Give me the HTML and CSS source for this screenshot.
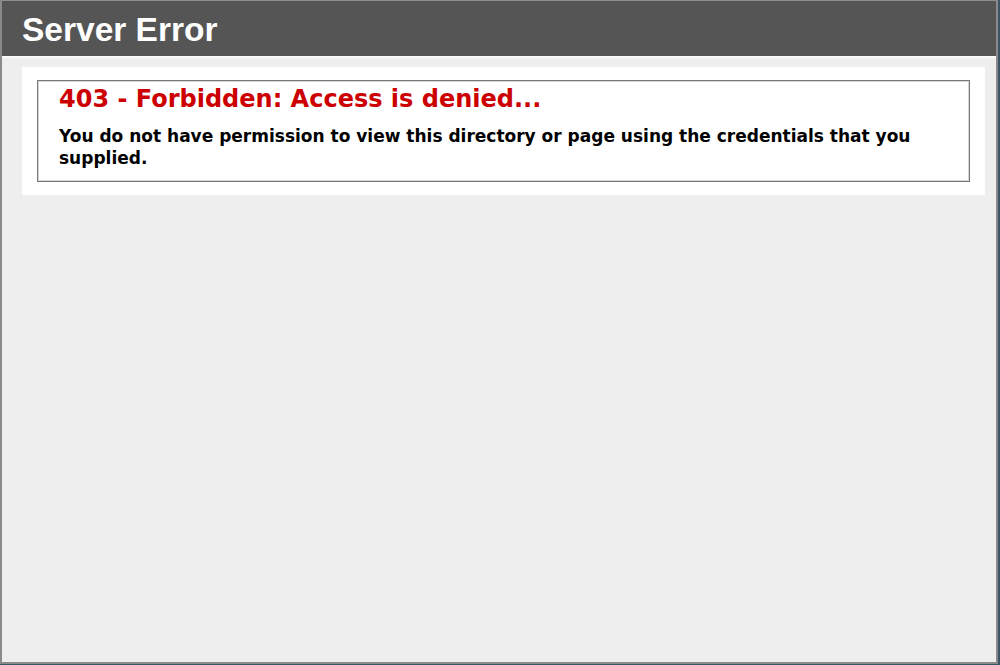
FILE: index.html
```html
<!DOCTYPE html>
<html>
<head>
<meta charset="utf-8">
<title>403 - Forbidden: Access is denied.</title>
<link rel="stylesheet" href="styles.css">
</head>
<body>
<div class="window">
  <div class="header"><h1 class="title">Server Error</h1></div>
  <div class="content">
    <div class="container">
      <div class="fieldset">
        <h2 class="err-title">403 - Forbidden: Access is denied...</h2>
        <h3 class="err-text">You do not have permission to view this directory or page using the credentials that you supplied.</h3>
      </div>
    </div>
  </div>
</div>
</body>
</html>
```

FILE: styles.css
```css
html, body {
  margin: 0;
  padding: 0;
  height: 665px;
  overflow: hidden;
  background: #3b5565;
}
.window {
  box-sizing: border-box;
  width: 998px;
  height: 664px;
  background: #eeeeee;
  border-left: 2px solid #8a8a8a;
  border-right: 2px solid #8a8a8a;
  border-bottom: 2px solid #8a8a8a;
  border-top: 1px solid #8d8d8d;
  display: flex;
  flex-direction: column;
}
.header {
  box-sizing: border-box;
  height: 57px;
  background: #555555;
  border-bottom: 2px solid #fafafa;
  display: flex;
  align-items: center;
  padding: 3px 0 0 20px;
}
.title {
  margin: 0;
  font-family: "Liberation Sans", Arial, sans-serif;
  font-weight: bold;
  font-size: 33.5px;
  color: #ffffff;
  line-height: 1;
}
.content {
  padding: 9px 0 0 20px;
}
.container {
  box-sizing: border-box;
  width: 963px;
  background: #ffffff;
  padding: 13px 15px 13px 15px;
}
.fieldset {
  box-sizing: border-box;
  height: 102px;
  border: 1px solid #7a7a7a;
  box-shadow: inset 1px 1px 0 #d6d6d6, inset -1px -1px 0 #d6d6d6;
  padding: 4px 20px 0 21px;
  font-family: "DejaVu Sans", Verdana, sans-serif;
}
.err-title {
  margin: 0;
  font-size: 24px;
  line-height: 28px;
  color: #cc0000;
  font-weight: bold;
}
.err-text {
  margin: 12px 0 0 0;
  font-size: 17px;
  line-height: 22px;
  color: #000000;
  font-weight: bold;
}
```
